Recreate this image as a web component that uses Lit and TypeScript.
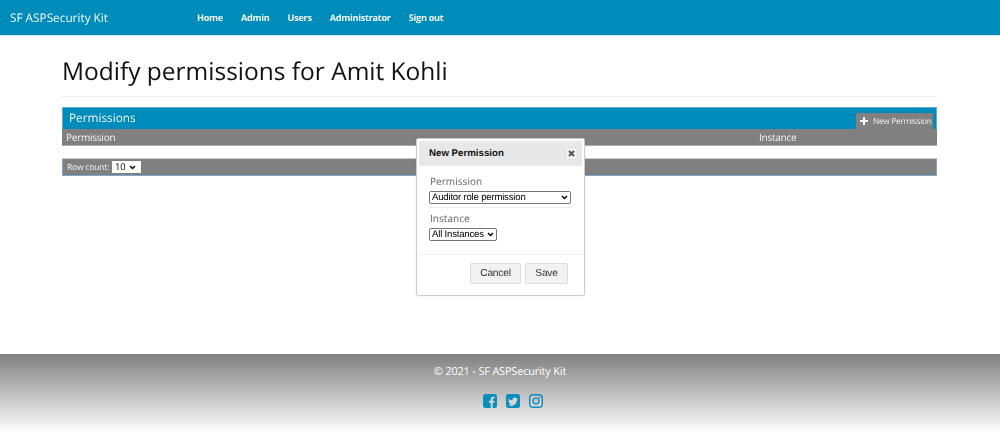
import { LitElement, html, css } from "lit";
import { customElement } from "lit/decorators.js";

@customElement("app-root")
export class AppRoot extends LitElement {
  static styles = css`
    :host { display: block; height: 433px; position: relative; overflow: hidden; background: #fff; font-family: "Open Sans", sans-serif; color: #222; text-rendering: geometricPrecision; }
    .page { filter: blur(.45px); height: 433px; position: relative; }
    .nav { height: 35px; background: #008cba; border-bottom: 1px solid #d5e9f1; display: flex; align-items: center; }
    .brand { color: #f2f9fb; font-size: 11.8px; margin-left: 10px; width: 187px; flex: none; }
    .links { display: flex; gap: 18px; }
    .links a { color: #eef7fa; font-size: 9.2px; letter-spacing: -.3px; font-weight: 700; }
    .main { margin: 0 63px 0 62px; }
    h1 { font-size: 24.5px; font-weight: 400; margin: 0; padding-top: 17px; line-height: 37px; color: #111; }
    .rule { height: 1px; background: #eee; margin: 6px 0 10px; }
    .phead { height: 22px; background: #008cba; display: flex; justify-content: space-between; color: #f0f8fb; border: 1px solid #62aed0; border-width: 1px 1px 0; box-sizing: border-box; }
    .phead .t { font-size: 11.8px; line-height: 21px; margin-left: 6px; }
    .add { align-self: flex-end; margin-right: 3px; height: 16px; width: 77px; background: #808080; color: #eee; font-size: 8.3px; letter-spacing: -.28px; display: flex; align-items: center; gap: 5px; padding-left: 4px; box-sizing: border-box; white-space: nowrap; }
    .add svg { flex: none; }
    .cols { height: 17px; background: #808080; color: #f2f2f2; font-size: 10px; letter-spacing: -.24px; line-height: 17px; display: grid; grid-template-columns: 693px 1fr; padding-left: 4px; border-bottom: 1px solid #aaa; box-sizing: border-box; }
    .blank { height: 13px; background: #fff; border-bottom: 1px solid #ccc; box-sizing: border-box; }
    .foot { height: 17px; background: #808080; color: #f2f2f2; font-size: 8.6px; letter-spacing: -.25px; display: flex; align-items: center; padding-left: 4px; gap: 3px; border: 1px solid #7fa6cf; border-width: 0 1px 1px; box-sizing: border-box; }
    select { appearance: none; -webkit-appearance: none; background: #fff url("data:image/svg+xml,%3Csvg xmlns='http://www.w3.org/2000/svg' width='7' height='5'%3E%3Cpath d='M1 1l2.500 2.500L6 1' fill='none' stroke='%23000' stroke-width='1.400'/%3E%3C/svg%3E") no-repeat; color: #000; outline: none; text-rendering: geometricPrecision; }
    .foot select { font-family: "Open Sans", sans-serif; font-size: 9.4px; height: 12px; width: 29px; padding: 0 0 0 3px; border: 0; background-position: right 5px center; line-height: 12px; letter-spacing: -.2px; }
    .modal { position: absolute; left: 416px; top: 138px; width: 169px; height: 158px; box-sizing: border-box; background: #fff; border: 1px solid #ccc; border-radius: 2px; padding: 2px; box-shadow: 0 0 2px rgba(0,0,0,.1); font-family: "Liberation Sans", sans-serif; }
    .mhead { height: 25px; background: #e8e8e8; border-radius: 2px; display: flex; justify-content: space-between; align-items: center; padding: 0 4px 0 10px; font-size: 9.7px; font-weight: 700; color: #111; }
    .x { width: 13px; height: 13px; background: #f2f2f2; border: 1px solid #ddd; border-radius: 2px; display: flex; align-items: center; justify-content: center; box-sizing: border-box; }
    .mbody { padding: 8px 10px 0 10px; }
    label { display: block; font-family: "Open Sans", sans-serif; font-size: 10.1px; color: #666; line-height: 14px; padding-left: 1px; }
    .mbody select { display: block; font-family: "Liberation Sans", sans-serif; font-size: 9.6px; letter-spacing: -.2px; height: 13px; line-height: 11px; padding: 0 0 0 2px; margin-top: 3px; border: 1px solid #767676; border-radius: 2px; box-sizing: border-box; background-position: right 2px center; }
    .s1 { width: 142px; }
    .s2 { width: 68px; }
    .fieldsep { height: 1px; background: #f0f0f0; margin: 3px -1px 3px -1px; }
    .msep { height: 1px; background: #eee; margin: 13px -1px 0 0; }
    .mfoot { display: flex; justify-content: flex-end; gap: 4px; padding: 8px 14px 0 0; }
    .btn { height: 21px; border: 1px solid #ddd; border-radius: 2px; background: #f2f2f2; color: #333; font-size: 10.2px; letter-spacing: -.2px; display: flex; align-items: center; justify-content: center; box-sizing: border-box; }
    .cancel { width: 51px; } .save { width: 43px; }
    .footer { position: absolute; left: 0; right: 0; top: 354px; height: 79px; background: linear-gradient(#808080, #fff); text-align: center; color: #fff; font-size: 10.9px; letter-spacing: -.15px; padding-top: 10px; box-sizing: border-box; }
    .social { display: flex; justify-content: center; gap: 9px; margin: 15px 0 0 25px; }
    .social svg { display: block; }
  `;
  render() {
    return html`<div class="page">
      <div class="nav"><div class="brand">SF ASPSecurity Kit</div><div class="links"><a>Home</a><a>Admin</a><a>Users</a><a>Administrator</a><a>Sign out</a></div></div>
      <div class="main">
        <h1>Modify permissions for Amit Kohli</h1>
        <div class="rule"></div>
        <div class="panel">
          <div class="phead"><span class="t">Permissions</span>
            <span class="add"><svg width="8" height="8" viewBox="0 0 8 8"><path d="M3 0h2v3h3v2H5v3H3V5H0V3h3z" fill="#fff"/></svg>New Permission</span></div>
          <div class="cols"><span>Permission</span><span>Instance</span></div>
          <div class="blank"></div>
          <div class="foot"><span>Row count:</span><select><option>10</option></select></div>
        </div>
      </div>
      <div class="modal">
        <div class="mhead"><span>New Permission</span><span class="x"><svg width="7" height="7" viewBox="0 0 7 7"><path d="M1 1l5 5M6 1L1 6" stroke="#555" stroke-width="2"/></svg></span></div>
        <div class="mbody">
          <label>Permission</label><select class="s1"><option>Auditor role permission</option></select>
          <div class="fieldsep"></div>
          <label>Instance</label><select class="s2"><option>All Instances</option></select>
        </div>
        <div class="msep"></div>
        <div class="mfoot"><span class="btn cancel">Cancel</span><span class="btn save">Save</span></div>
      </div>
      <div class="footer">© 2021 - SF ASPSecurity Kit
        <div class="social">
          <svg width="14" height="14" viewBox="0 0 14 14"><rect width="14" height="14" rx="2.500" fill="#0a8fbd"/><path d="M9.600 14V8.800h1.600l.3-2H9.600V5.600c0-.6.2-1 1-1h1V2.800c-.3 0-.8-.1-1.400-.1-1.500 0-2.500.9-2.500 2.600v1.500H6v2h1.700V14z" fill="#d6d6d6"/></svg>
          <svg width="14" height="14" viewBox="0 0 14 14"><rect width="14" height="14" rx="2.500" fill="#0a8fbd"/><path d="M11.500 4.400c-.4.200-.8.300-1.100.3.400-.2.700-.6.900-1-.4.200-.8.400-1.200.5a2 2 0 0 0-3.400 1.800C5 6.500 3.700 5.700 2.800 4.500c-.5.900-.2 2 .6 2.600-.3 0-.6-.1-.9-.2 0 .9.700 1.700 1.600 1.900-.3.100-.6.100-.9 0 .2.800 1 1.300 1.800 1.400-.8.600-1.800.9-2.900.7a5.700 5.700 0 0 0 8.800-5.100c.4-.3.800-.6 1-1z" fill="#d6d6d6"/></svg>
          <svg width="14" height="14" viewBox="0 0 14 14"><rect x=".7" y=".7" width="12.600" height="12.600" rx="3.300" fill="none" stroke="#0a8fbd" stroke-width="1.400"/><circle cx="7" cy="7" r="2.900" fill="none" stroke="#0a8fbd" stroke-width="1.300"/><circle cx="10.500" cy="3.500" r=".8" fill="#0a8fbd"/></svg>
        </div>
      </div>
    </div>`;
  }
}
